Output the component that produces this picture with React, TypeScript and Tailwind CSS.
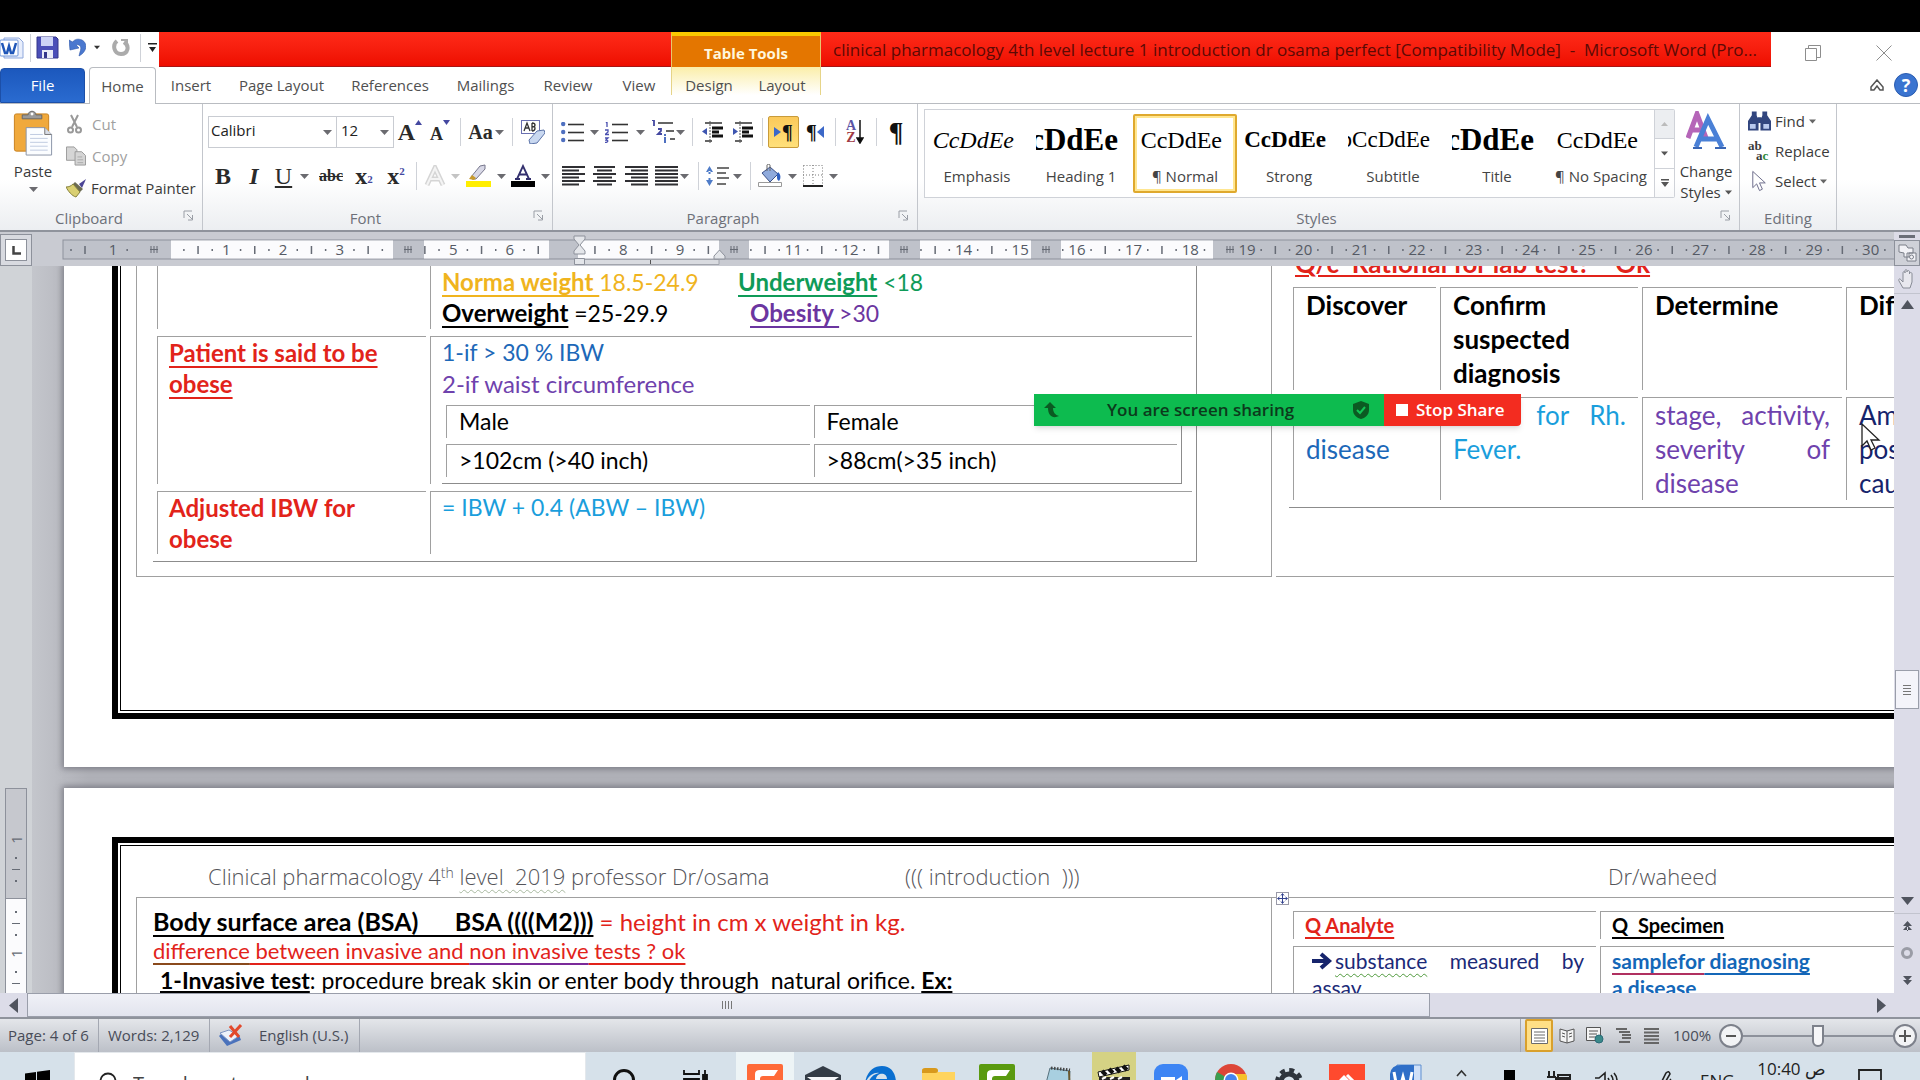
import React from "react";

type Kids = { children?: React.ReactNode; className?: string };

const Caret = ({ className = "text-[#6b6b70]" }: { className?: string }) => (
  <svg width="9" height="5" viewBox="0 0 9 5" className={className} aria-hidden="true">
    <path d="M0 0h9L4.500 5z" fill="currentColor" />
  </svg>
);

const Sep = ({ className = "w-2" }: { className?: string }) => (
  <span className={`flex h-7 shrink-0 justify-center ${className}`}>
    <span className="w-px bg-[#cfd2d8]" />
  </span>
);

function Tool({ label, className = "", children }: Kids & { label: string }) {
  return (
    <button type="button" aria-label={label} className={`flex h-8 shrink-0 items-center justify-center ${className}`}>
      {children}
    </button>
  );
}

function Group({ label, className = "", launcher = true, children }: Kids & { label: string; launcher?: boolean }) {
  return (
    <section className={`flex shrink-0 flex-col border-r border-[#c3c6cc] ${className}`}>
      <div className="flex-1">{children}</div>
      <div className={`relative flex h-6 items-center justify-center text-[15px] text-[#6d7079] ${launcher ? "pr-6" : ""}`}>
        {label}
        {launcher && (
          <button type="button" aria-label={`${label} options`} className="absolute right-2 top-1">
            <svg width="11" height="11" viewBox="0 0 11 11" fill="none" stroke="#9a9ea6">
              <path d="M1 8V1h8M4 4l5 5M9.500 5v5H5" />
            </svg>
          </button>
        )}
      </div>
    </section>
  );
}

const Lines = ({ rows }: { rows: number[][] }) => (
  <svg width="23" height="20" viewBox="0 0 23 20" stroke="#2f2f33" strokeWidth="2">
    {rows.map(([a, b], i) => (
      <path key={i} d={`M${a} ${1 + i * 3.5}H${b}`} />
    ))}
  </svg>
);

const L6 = [[0, 23], [0, 17], [0, 23], [0, 17], [0, 23], [0, 17]];
const C6 = [[1, 22], [4, 19], [0, 23], [4, 19], [0, 23], [4, 19]];
const R6 = [[0, 23], [6, 23], [0, 23], [6, 23], [0, 23], [6, 23]];
const J6 = [[0, 23], [0, 23], [0, 23], [0, 23], [0, 23], [0, 23]];

function TitleBar() {
  return (
    <header className="flex h-[35px] shrink-0 bg-white">
      <div className="flex w-[159px] shrink-0 items-center pb-1">
        <svg width="24" height="24" viewBox="0 0 24 24" className="shrink-0">
          <path d="M4 2h15l4 4v16H4z" fill="#e8eefc" stroke="#8fa8dc" />
          <rect x="0" y="4" width="18" height="16" rx="1" fill="#fff" stroke="#6b92d8" />
          <path d="M2 7l3 10h2l2-7 2 7h2l3-10" fill="none" stroke="#1f56b8" strokeWidth="2.500" />
        </svg>
        <Sep className="w-3" />
        <button type="button" aria-label="Save">
          <svg width="23" height="23" viewBox="0 0 23 23">
            <path d="M1 1h19l2 2v19H1z" fill="#4b4fb8" stroke="#34368a" />
            <path d="M5 1h12v9H5z" fill="#cdd3f6" />
            <path d="M6 14h11v8H6z" fill="#e9ebf7" />
            <path d="M8 16h3v6H8z" fill="#34368a" />
          </svg>
        </button>
        <button type="button" aria-label="Undo" className="ml-2.5 flex items-center gap-2">
          <svg width="17" height="19" viewBox="0 0 17 19">
            <path d="M0 2l1 10 9-2-3-3c4-1 6 2 4 7l-1 4c8-4 9-13 3-16C9 .5 6 1 3.500 4z" fill="#4a78cf" stroke="#2c55a8" strokeWidth=".6" />
          </svg>
          <Caret className="w-[6px] text-[#333]" />
        </button>
        <button type="button" aria-label="Redo" className="ml-3">
          <svg width="18" height="19" viewBox="0 0 18 19" fill="none" stroke="#ababab" strokeWidth="4">
            <path d="M5 3C0 7 2 16 9 16s9-8 3-12" />
            <path d="M9 2h6v5" strokeWidth="2" />
          </svg>
        </button>
        <Sep className="ml-1 w-3" />
        <button type="button" aria-label="Customize quick access" className="ml-0.5">
          <svg width="9" height="9" viewBox="0 0 9 9" fill="#222">
            <path d="M0 0h9v1.500H0zM1 4h7L4.500 9z" />
          </svg>
        </button>
      </div>
      <div className="w-[512px] shrink-0 border-b border-[#a81414] bg-linear-to-b from-[#ff2a18] to-[#ee0c00]" />
      <div className="flex w-[150px] shrink-0 items-center justify-center border-x border-t-4 border-x-[#e8c870] border-t-[#fbc900] bg-[#e47600] pt-1 text-[15px] font-bold text-[#fff6dc]">
        Table Tools
      </div>
      <h1 className="min-w-0 flex-1 whitespace-nowrap border-b border-[#a81414] bg-linear-to-b from-[#ff2a18] to-[#ee0c00] pl-3 text-[17px] leading-[36px] text-[#5c0a05]">
        clinical pharmacology 4th level lecture 1 introduction dr osama perfect [Compatibility Mode]&nbsp; -&nbsp; Microsoft Word (Pro...
      </h1>
      <div className="flex w-[149px] shrink-0 items-center pl-[34px] pt-1.5">
        <button type="button" aria-label="Restore">
          <svg width="16" height="16" viewBox="0 0 16 16" fill="none" stroke="#8d8d8d">
            <path d="M.5 3.500h11v12H.5zM3.500 3V.5h12v12H12" />
          </svg>
        </button>
        <button type="button" aria-label="Close" className="ml-[55px]">
          <svg width="16" height="16" viewBox="0 0 16 16" stroke="#8d8d8d">
            <path d="M.5.5l15 15M15.500.5l-15 15" />
          </svg>
        </button>
      </div>
    </header>
  );
}

function Tabs() {
  const plain = "shrink-0 text-center";
  return (
    <nav className="flex h-[37px] shrink-0 items-stretch border-b border-[#b9bcc1] bg-white text-[15px] text-[#505050]">
      <button type="button" className="mt-px w-[85px] shrink-0 rounded-t-sm border border-[#1c4fa8] bg-linear-to-b from-[#1c58bd] to-[#2a6bd0] text-white">
        File
      </button>
      <button type="button" className="-mb-px ml-1 w-[67px] shrink-0 rounded-t-sm border border-b-0 border-[#b9bcc1] bg-white">
        Home
      </button>
      <button type="button" className={`${plain} w-[70px]`}>Insert</button>
      <button type="button" className={`${plain} w-[111px]`}>Page Layout</button>
      <button type="button" className={`${plain} w-[106px]`}>References</button>
      <button type="button" className={`${plain} w-[85px]`}>Mailings</button>
      <button type="button" className={`${plain} w-[80px]`}>Review</button>
      <button type="button" className={`${plain} w-[62px]`}>View</button>
      <div className="ml-px mb-2 flex w-[150px] shrink-0 border-x border-[#e6d488] bg-linear-to-b from-[#fbeea8] to-white pl-0.5">
        <button type="button" className="-mb-2 w-[72px]">Design</button>
        <button type="button" className="-mb-2 w-[78px]">Layout</button>
      </div>
      <div className="flex flex-1 items-center justify-end gap-2.5 pr-0.5">
        <button type="button" aria-label="Collapse ribbon">
          <svg width="14" height="12" viewBox="0 0 14 12" fill="none" stroke="#555" strokeWidth="1.500">
            <path d="M1 8l6-7 6 7v3h-3L7 7l-3 4H1z" />
          </svg>
        </button>
        <button type="button" aria-label="Help" className="flex size-6 items-center justify-center rounded-full border border-[#2a5cb0] bg-[#3a74d0] text-lg font-bold leading-none text-white">
          ?
        </button>
      </div>
    </nav>
  );
}

function Clipboard() {
  return (
    <Group label="Clipboard" className="w-[203px]">
      <div className="flex pt-1">
        <button type="button" className="flex w-[66px] flex-col items-center pt-0.5 text-[15px] leading-5 text-[#3b3b3b]">
          <svg width="40" height="47" viewBox="0 0 40 48">
            <rect x="1" y="4" width="35" height="38" rx="2" fill="#f0a93c" stroke="#c98220" />
            <path d="M9 9V5h6c0-5 8-5 8 0h6v4z" fill="#9a9a9a" stroke="#666" />
            <circle cx="19" cy="4" r="1.500" fill="#fff" />
            <path d="M13 18h19l7 7v21H13z" fill="#fbfdff" stroke="#8a94a8" />
            <path d="M32 18v7h7" fill="#d8dde6" stroke="#777" />
            <path d="M17 25h13M17 29h18M17 33h18M17 37h18M17 41h18" stroke="#c0cbe0" />
          </svg>
          <span className="mt-1">Paste</span>
          <Caret className="mt-1.5 text-[#6b6b70]" />
        </button>
        <div className="flex flex-col text-[15px]">
          <button type="button" className="flex h-8 items-center gap-2 text-[#a0a0a0]">
            <svg width="18" height="20" viewBox="0 0 18 20" fill="none" stroke="#999" strokeWidth="2">
              <path d="M5 1l6 12M12 1L6 13" />
              <circle cx="4.500" cy="16" r="2.500" />
              <circle cx="12.500" cy="16" r="2.500" />
            </svg>
            Cut
          </button>
          <button type="button" className="flex h-8 items-center gap-1.5 text-[#a0a0a0]">
            <svg width="20" height="20" viewBox="0 0 21 20" fill="#d5d5d5" stroke="#999">
              <path d="M.5.5h8l3 3v11H.5z" />
              <path d="M9.500 5.500h7l4 4v10h-11z" />
              <path d="M12 11h5M12 14h6M12 17h6" stroke="#aaa" />
            </svg>
            Copy
          </button>
          <button type="button" className="flex h-8 items-center gap-1 whitespace-nowrap text-[#3b3b3b]">
            <svg width="21" height="19" viewBox="0 0 21 19">
              <path d="M20 0l-7 5 3 4z" fill="#4b4496" />
              <path d="M9 3l8 7-3 3-8-7z" fill="#6b6b52" />
              <path d="M7 5l7 8-4 5C6 17 2 12 0 8c3 0 5-1 7-3z" fill="#d9cf72" stroke="#85803c" />
            </svg>
            Format Painter
          </button>
        </div>
      </div>
    </Group>
  );
}

const serif = "font-['Liberation_Serif',serif] text-[#2a2a2a]";

function FontGroup() {
  return (
    <Group label="Font" className="w-[350px]">
      <div className="flex items-center pl-[5px] pt-3">
        <label className="relative flex h-8 w-[129px] shrink-0 items-center border border-[#c9ccd2] bg-white">
          <select aria-label="Font name" className="w-full appearance-none bg-transparent pb-1 pl-0.5 text-[15px] text-[#222]">
            <option>Calibri</option>
          </select>
          <span className="pointer-events-none absolute right-1"><Caret /></span>
        </label>
        <label className="relative flex h-8 w-[57px] shrink-0 items-center border border-l-0 border-[#c9ccd2] bg-white">
          <select aria-label="Font size" className="w-full appearance-none bg-transparent pb-1 pl-1 text-[15px] text-[#222]">
            <option>12</option>
          </select>
          <span className="pointer-events-none absolute right-1"><Caret /></span>
        </label>
        <Tool label="Grow font" className={`w-8 ${serif} items-start text-[24px] font-bold leading-8`}>
          A<svg width="7" height="5" viewBox="0 0 7 5" className="mt-1"><path d="M0 5h7L3.500 0z" fill="#4448a0" /></svg>
        </Tool>
        <Tool label="Shrink font" className={`w-7 ${serif} items-start text-[18px] font-bold leading-9`}>
          A<svg width="7" height="5" viewBox="0 0 7 5" className="mt-1"><path d="M0 0h7L3.500 5z" fill="#4448a0" /></svg>
        </Tool>
        <Sep className="w-3" />
        <Tool label="Change case" className={`w-10 gap-0.5 ${serif} text-[20px] font-bold`}>Aa <Caret /></Tool>
        <Sep className="w-3" />
        <Tool label="Clear formatting" className="w-[30px]">
          <svg width="24" height="24" viewBox="0 0 24 24">
            <rect x=".5" y=".5" width="18" height="13" fill="#fff" stroke="#6a70b0" />
            <path d="M3 11l3-8 3 8M4 8h4M11 3v8M11 7c4-2 4 4 0 4M11 3c4 0 4 4 0 4" fill="none" stroke="#333" strokeWidth="1.300" />
            <path d="M8 20l8-9 7-1 1 3-8 10-7 1z" fill="#c9d8f0" stroke="#5c74a8" />
          </svg>
        </Tool>
      </div>
      <div className="flex items-center pl-[5px] pt-3">
        <Tool label="Bold" className={`w-[30px] ${serif} text-[24px] font-bold`}>B</Tool>
        <Tool label="Italic" className={`w-8 ${serif} text-[24px] font-bold italic`}>I</Tool>
        <Tool label="Underline" className={`w-11 gap-2 ${serif} text-[24px]`}><span className="underline">U</span><Caret /></Tool>
        <Tool label="Strikethrough" className={`w-[34px] ${serif} text-[16px] font-bold line-through`}>abc</Tool>
        <Tool label="Subscript" className={`w-8 ${serif} text-[24px] font-bold`}>x<sub className="text-[11px] text-[#4448a0]">2</sub></Tool>
        <Tool label="Superscript" className={`w-8 ${serif} text-[24px] font-bold`}>x<sup className="text-[11px] text-[#4448a0]">2</sup></Tool>
        <Sep className="w-2" />
        <Tool label="Text effects" className="w-11 gap-1">
          <svg width="23" height="22" viewBox="0 0 23 22" fill="none" stroke="#d5d5d5" strokeWidth="5">
            <path d="M3 20L11 3l8 17M6 14h10" />
            <path d="M3 20L11 3l8 17M6 14h10" stroke="#f4f4f4" strokeWidth="2" />
          </svg>
          <Caret className="text-[#c4c4c4]" />
        </Tool>
        <Tool label="Highlight colour" className="w-11 gap-1.5">
          <svg width="25" height="24" viewBox="0 0 25 24">
            <path d="M5 13L14 2l5-1v4L10 15H6z" fill="#d8d8e6" stroke="#77778c" />
            <path d="M3 15l3-4 4 3-2 2z" fill="#c79a2c" />
            <path d="M0 17h25v6H0z" fill="#ffee00" />
          </svg>
          <Caret />
        </Tool>
        <Tool label="Font colour" className="w-11 gap-1.5">
          <svg width="24" height="24" viewBox="0 0 24 24">
            <path d="M6 15l6-13 6 13M8 10.500h8M4 15h5M15 15h5" fill="none" stroke="#33306e" strokeWidth="1.800" />
            <path d="M0 17h24v6H0z" fill="#000" />
          </svg>
          <Caret />
        </Tool>
      </div>
    </Group>
  );
}

function ListIcon({ kind }: { kind: "dot" | "num" }) {
  return (
    <svg width="23" height="21" viewBox="0 0 23 21">
      {[2, 10, 18].map((y, i) => (
        <g key={y}>
          <path d={`M7 ${y + 0.5}h16`} stroke="#333" strokeWidth="1.600" />
          {kind === "dot" ? (
            <circle cx="2.200" cy={y} r="2.200" fill="#4f70c0" />
          ) : (
            <path d={["M1 1l1-1v5", "M0 8h3v2L0 12.500h4", "M0 16h3l-2 2c3 0 2 2.500-1 2.500"][i]} fill="none" stroke="#4a50b0" strokeWidth="1.300" />
          )}
        </g>
      ))}
    </svg>
  );
}

const Indent = ({ flip = false }: { flip?: boolean }) => (
  <svg width="21" height="22" viewBox="0 0 21 22">
    <path d="M3 2h17M3 20h7" stroke="#333" strokeWidth="1.500" />
    <path d="M10 7h11M10 11h7M10 15h11" stroke="#111" strokeWidth="3" />
    <path d="M8 0v22" stroke="#555" strokeDasharray="2 1" />
    <path d={flip ? "M6 10.500L1 7v7z" : "M0 10.500L5 7v7z"} fill="#3e56b0" />
  </svg>
);

const Pilcrow = ({ size = "text-[20px]" }: { size?: string }) => (
  <span className={`font-['Liberation_Serif',serif] font-bold leading-none text-[#111] ${size}`}>¶</span>
);

function Paragraph() {
  return (
    <Group label="Paragraph" className="w-[365px]">
      <div className="flex items-center pl-[5px] pt-3">
        <Tool label="Bullets" className="w-11 gap-1.5"><ListIcon kind="dot" /><Caret /></Tool>
        <Tool label="Numbering" className="w-[45px] gap-2"><ListIcon kind="num" /><Caret /></Tool>
        <Tool label="Multilevel list" className="w-[41px]">
          <svg width="26" height="25" viewBox="0 0 26 25">
            <path d="M8 3h15M16 11h8M20 19h5" stroke="#333" strokeWidth="1.600" />
            <path d="M2 0h2v6M8 9h3v2l-3 3h4" fill="none" stroke="#4448a0" strokeWidth="1.800" />
            <path d="M15 17v6M15 14v2" stroke="#4f70c0" strokeWidth="2" />
          </svg>
          <Caret />
        </Tool>
        <Sep className="w-[9px]" />
        <Tool label="Decrease indent" className="w-[30px]"><Indent /></Tool>
        <Tool label="Increase indent" className="w-[30px]"><Indent flip /></Tool>
        <Sep className="w-[11px]" />
        <Tool label="Left to right" className="w-[31px] rounded-xs border border-[#c89b3a] bg-linear-to-b from-[#fbc95a] to-[#ffe07a]">
          <svg width="8" height="10" viewBox="0 0 8 10"><path d="M0 0l7 5-7 5z" fill="#3c68c8" /></svg>
          <Pilcrow />
        </Tool>
        <Tool label="Right to left" className="w-8">
          <Pilcrow />
          <svg width="7" height="12" viewBox="0 0 7 12"><path d="M7 0L0 6l7 6z" fill="#3c68c8" /></svg>
        </Tool>
        <Sep className="w-2" />
        <Tool label="Sort" className="w-8">
          <span className="flex flex-col font-['Liberation_Serif',serif] text-[14px] font-bold leading-3">
            <span className="text-[#5b55a5]">A</span><span className="text-[#a03a44]">Z</span>
          </span>
          <svg width="8" height="24" viewBox="0 0 8 24"><path d="M4 0v20M4 23l-3-5h6z" stroke="#111" strokeWidth="1.500" /></svg>
        </Tool>
        <Sep className="w-2.5" />
        <Tool label="Show marks" className="w-[30px]"><Pilcrow size="text-[27px]" /></Tool>
      </div>
      <div className="flex items-center pl-[5px] pt-3">
        <Tool label="Align left" className="w-[30px]"><Lines rows={L6} /></Tool>
        <Tool label="Center" className="w-8"><Lines rows={C6} /></Tool>
        <Tool label="Align right" className="w-8"><Lines rows={R6} /></Tool>
        <Tool label="Justify" className="w-10 gap-0.5"><Lines rows={J6} /><Caret /></Tool>
        <Sep className="w-3" />
        <Tool label="Line spacing" className="w-10 gap-1">
          <svg width="23" height="21" viewBox="0 0 23 21">
            <path d="M3.500 0L0 6h7zM3.500 20L0 14h7zM2.500 5h2v3h-2zM2.500 12h2v3h-2z" fill="#4f7cc8" />
            <path d="M11 2h12M11 7h9M11 12h12M11 18h9" stroke="#444" strokeWidth="1.600" />
          </svg>
          <Caret />
        </Tool>
        <Sep className="w-3" />
        <Tool label="Shading" className="w-[42px] gap-1.5">
          <svg width="24" height="24" viewBox="0 0 24 24">
            <path d="M4 9l8-6 8 7-8 8z" fill="#8faadc" stroke="#3b4f86" />
            <path d="M9 7V1c0-1 3-1 3 0v6" fill="none" stroke="#666" />
            <path d="M20 8c3 2 3 7 1 9-2-1-3-4-1-9z" fill="#2e5fc0" />
            <path d="M.5 18.500h23v4H.5z" fill="#fff" stroke="#999" />
          </svg>
          <Caret />
        </Tool>
        <Tool label="Borders" className="w-11 gap-1.5">
          <svg width="20" height="22" viewBox="0 0 20 22" fill="none">
            <path d="M.5.5h19v19M.5.5v19M10 0v20M0 10h20" stroke="#777" strokeDasharray="1 2" />
            <path d="M0 21h20" stroke="#222" strokeWidth="2" />
          </svg>
          <Caret />
        </Tool>
      </div>
    </Group>
  );
}

const styleItems = [
  { name: "Emphasis", sample: "CcDdEe", cls: "italic text-[24px] text-[#222]" },
  { name: "Heading 1", sample: "cDdEe", cls: "font-bold text-[31px]" },
  { name: "¶ Normal", sample: "CcDdEe", cls: "text-[24px]" },
  { name: "Strong", sample: "CcDdEe", cls: "font-bold text-[23px]" },
  { name: "Subtitle", sample: "bCcDdEe", cls: "text-[23px]" },
  { name: "Title", sample: "cDdEe", cls: "font-bold text-[31px]" },
  { name: "¶ No Spacing", sample: "CcDdEe", cls: "text-[24px]" },
];

function Styles() {
  return (
    <Group label="Styles" className="w-[822px]">
      <div className="flex pl-[6px] pt-[5px]">
        <div className="flex h-[89px] w-[731px] border border-[#cfd2d8] bg-white">
          {styleItems.map((s) => (
            <button
              type="button"
              key={s.name}
              className={`flex w-[104px] shrink-0 flex-col items-center ${s.name === "¶ Normal" ? "my-1 rounded-xs border-2 border-[#dfa92e] pt-2 shadow-[inset_0_0_0_2px_#ffe690]" : "pt-3.5"}`}
            >
              <span className={`mr-2 flex h-8 w-[82px] items-center justify-end overflow-hidden font-['Liberation_Serif',serif] text-black ${s.cls}`}>{s.sample}</span>
              <span className="mt-2 whitespace-nowrap text-[15px] leading-6 text-[#444]">{s.name}</span>
            </button>
          ))}
        </div>
        <div className="flex h-[89px] w-5 flex-col divide-y divide-[#cfd2d8] rounded-r-xs border border-l-0 border-[#cfd2d8]">
          <button type="button" aria-label="Previous styles" className="flex flex-1 items-center justify-center bg-[#eceef1]"><svg width="7" height="4" viewBox="0 0 7 4"><path d="M0 4h7L3.500 0z" fill="#bbb" /></svg></button>
          <button type="button" aria-label="Next styles" className="flex flex-1 items-center justify-center"><Caret className="w-[7px] text-[#555]" /></button>
          <button type="button" aria-label="More styles" className="flex flex-1 items-center justify-center"><svg width="8" height="8" viewBox="0 0 8 8" fill="#555"><path d="M0 0h8v1.500H0zM0 3h8L4 8z" /></svg></button>
        </div>
        <button type="button" className="flex w-[62px] flex-col items-center pt-0.5 text-[15px] leading-[21px] text-[#3b3b3b]">
          <svg width="40" height="40" viewBox="0 0 40 40" fill="none">
            <path d="M2 27L11 3l9 24M5 19h12" stroke="#b565b8" strokeWidth="5" />
            <path d="M10 36L22 8l14 28M14 28h17" stroke="#4a80d6" strokeWidth="5" />
            <path d="M7 37h9M29 37h11" stroke="#3a66b4" strokeWidth="2" />
          </svg>
          <span className="mt-2.5">Change</span>
          <span className="flex items-center gap-1">Styles <Caret className="w-[7px] text-[#555]" /></span>
        </button>
      </div>
    </Group>
  );
}

function Editing() {
  return (
    <Group label="Editing" launcher={false} className="w-[97px]">
      <div className="flex flex-col pl-2 pt-0.5 text-[15px] text-[#3b3b3b]">
        <button type="button" className="flex h-[30px] items-center gap-1">
          <svg width="23" height="21" viewBox="0 0 24 21" fill="#31457e">
            <path d="M4 0h5v4l2 6v10H0V10l4-6zM15 0h5v4l4 6v10H13V10l2-6zM10 6h4v6h-4z" />
            <path d="M2 13h6v5H2zM16 13h6v5h-6z" fill="#b9c9ee" />
          </svg>
          Find <Caret className="w-[7px] text-[#666]" />
        </button>
        <button type="button" className="flex h-[30px] items-center gap-1">
          <span className="w-[23px] text-left font-['Liberation_Serif',serif] text-[13px] font-bold leading-[10px]">
            ab<br /><span className="pl-2">a<span className="text-[#2c8a3a]">c</span></span>
          </span>
          Replace
        </button>
        <button type="button" className="flex h-[30px] items-center gap-1">
          <svg width="23" height="22" viewBox="0 0 24 22"><path d="M5 1v17l4-4 3 7 3-1.500L12 13h6z" fill="#fff" stroke="#6a6a88" /></svg>
          Select <Caret className="w-[7px] text-[#666]" />
        </button>
      </div>
    </Group>
  );
}

const UNIT = 56.7;
const ZERO = 169.7;
const bands = [[171, 393], [424, 549], [578, 719], [749, 889], [920, 1031], [1061, 1213]];
const gridMarks = [154, 408, 734, 904, 1046, 1230];
const hiddenNumbers = [0, 4, 7, 10, 13];

function Ruler() {
  const marks: React.ReactNode[] = [];
  for (let n = -1; n <= 30; n++) {
    const x = ZERO + n * UNIT;
    const grey = (p: number) => gridMarks.concat([564]).some((g) => Math.abs(g - p) < 13);
    if (!hiddenNumbers.includes(n)) marks.push(<text key={`n${n}`} x={x} y="23" textAnchor="middle">{Math.abs(n)}</text>);
    [0.25, 0.5, 0.75].forEach((f) => {
      const p = x + f * UNIT;
      if (p < 1888 && !grey(p)) marks.push(<path key={`${n}-${f}`} d={f === 0.5 ? `M${p} 14v8` : `M${p} 17v2`} stroke="#666b75" strokeWidth="1.500" />);
    });
    if (n === -1) marks.push(<path key="first" d={`M${x - 28} 14v8M${x - 42} 17v2`} stroke="#666b75" strokeWidth="1.500" />);
  }
  return (
    <svg className="h-[34px] w-full" fontSize="15" fill="#555a64">
      <rect x="63" y="8" width="1840" height="19" fill="#bfc2ca" stroke="#8d919b" />
      {bands.map(([a, b]) => (
        <rect key={a} x={a} y="8.500" width={b - a} height="18" fill="#fbfbfd" />
      ))}
      {marks}
      {gridMarks.map((g) => (
        <path key={g} d={`M${g - 3} 14v7M${g} 14v7M${g + 3} 14v7M${g - 4} 17.500h8`} stroke="#666b75" fill="none" />
      ))}
      <path d="M579 27.500h140v5H579z" fill="#d9dbe0" stroke="#a2a5ad" />
      <path d="M650.500 28v4" stroke="#555" />
      <path d="M574 4h11v3l-5 6 5 6v3h-11v-3l5-6-5-6z" fill="#e4e6ea" stroke="#8d919b" />
      <path d="M574.500 26.500h10v6h-10z" fill="#e4e6ea" stroke="#8d919b" />
      <path d="M714 27v-3l5.500-6 5.500 6v3z" fill="#e4e6ea" stroke="#8d919b" />
    </svg>
  );
}

const td = "border-l border-t border-[#a0a0a0] align-top p-0";
const u = "underline decoration-2 underline-offset-4";
const bu = `${u} text-[24px]`;

function BmiTable() {
  return (
    <table className="-mt-[7px] ml-4 w-[1044px] table-fixed border-separate border-spacing-x-1 border-spacing-y-[7px] border-b border-r border-[#8c8c8c] text-[23px] leading-[31px]">
      <tbody>
        <tr className="h-[63px]">
          <td className="w-[269px] border-l border-[#a0a0a0]" />
          <td className="border-l border-[#a0a0a0] p-0 pl-[11px] align-top">
            <div className="flex h-[31px] text-[#f0b41e]">
              <span className="w-[296px]"><b className={`${bu} whitespace-pre`}>Norma weight </b>18.5-24.9</span>
              <span className="text-[#0f9b58]"><b className={bu}>Underweight</b> &lt;18</span>
            </div>
            <div className="flex h-[31px]">
              <span className="w-[308px]"><b className={bu}>Overweight</b> =25-29.9</span>
              <span className="text-[#6b35a0]"><b className={`${bu} whitespace-pre`}>Obesity </b>&gt;30</span>
            </div>
          </td>
        </tr>
        <tr>
          <td className={`${td} pl-[11px] pr-6 text-[24px] font-bold text-[#e2231a]`}><span className={u}>Patient is said to be obese</span></td>
          <td className={`${td} pl-[11px]`}>
            <div className="text-[#1d68b8]">1-if &gt; 30 % IBW</div>
            <div className="text-[24px] text-[#6f42ad]">2-if waist circumference</div>
            <table className="w-[740px] table-fixed border-separate border-spacing-x-1 border-spacing-y-[6px] border-b border-r border-[#8c8c8c]">
              <tbody>
                <tr className="h-[33px]">
                  <td className={`${td} pl-3`}>Male</td>
                  <td className={`${td} pl-3`}>Female</td>
                </tr>
                <tr className="h-[33px]">
                  <td className={`${td} pl-3`}>&gt;102cm (&gt;40 inch)</td>
                  <td className={`${td} pl-3`}>&gt;88cm(&gt;35 inch)</td>
                </tr>
              </tbody>
            </table>
          </td>
        </tr>
        <tr className="h-[63px]">
          <td className={`${td} pl-[11px] pr-6 text-[24px] font-bold text-[#e2231a]`}>Adjusted IBW for obese</td>
          <td className={`${td} pl-[11px] text-[#1a9edc]`}>= IBW + 0.4 (ABW – IBW)</td>
        </tr>
      </tbody>
    </table>
  );
}

function LabTable() {
  return (
    <table className="ml-[13px] w-[762px] table-fixed border-separate border-spacing-x-1 border-spacing-y-[7px] border-b border-[#8c8c8c] text-[26px] leading-[34px]">
      <thead>
        <tr className="h-[103px] text-left">
          <th className={`${td} w-[143px] pl-3`}>Discover</th>
          <th className={`${td} w-[198px] pl-3 pr-6`}>Confirm suspected diagnosis</th>
          <th className={`${td} w-[200px] pl-3`}>Determine</th>
          <th className={`${td} pl-3`}>Differentiate</th>
        </tr>
      </thead>
      <tbody>
        <tr className="h-[103px]">
          <td className={`${td} pl-3 pt-[34px] text-[#1d68b8]`}>disease</td>
          <td className={`${td} pl-3 pr-3 text-[#1a9edc]`}>
            <div className="flex justify-end gap-5"><span>for</span><span>Rh.</span></div>
            Fever.
          </td>
          <td className={`${td} pl-3 pr-3 text-[#6f42ad]`}>
            <div className="flex justify-between"><span>stage,</span><span>activity,</span></div>
            <div className="flex justify-between"><span>severity</span><span>of</span></div>
            disease
          </td>
          <td className={`${td} pl-3 text-[#16246c]`}>Among<br />possible<br />causes</td>
        </tr>
      </tbody>
    </table>
  );
}

const squiggleGrey = "underline decoration-wavy decoration-1 underline-offset-4 decoration-[#a8b8a0]";
const pageShadow = "bg-white shadow-[0_0_6px_2px_rgba(90,90,100,0.6)]";

function Pages() {
  return (
    <main className="flex min-w-0 flex-1 flex-col overflow-hidden bg-linear-to-r from-[#c4c6cc] to-[#b0b1b8] to-3% font-['Lato',sans-serif] text-black">
      <article className={`ml-8 w-[2020px] shrink-0 pb-12 pl-12 ${pageShadow}`}>
        <div className="border-b-[6px] border-l-[6px] border-black pb-0.5 pl-0.5">
          <div className="flex h-[445px] border-b border-l border-black pl-[15px]">
            <div className="h-[311px] w-[1136px] shrink-0 border-x border-b border-[#a0a0a0]"><BmiTable /></div>
            <div className="ml-1 h-[311px] flex-1 border-b border-[#a0a0a0]">
              <h2 className="-mt-5 ml-[19px] whitespace-pre text-[26px] font-bold leading-[34px] text-[#e2231a] underline decoration-2 underline-offset-2">Q/c  Rational for lab test?    Ok</h2>
              <LabTable />
            </div>
          </div>
        </div>
      </article>
      <article className={`ml-8 mt-[21px] w-[2020px] shrink-0 pl-12 pt-[49px] ${pageShadow}`}>
        <div className="border-l-[6px] border-t-[6px] border-black pl-0.5 pt-0.5">
          <div className="border-l border-t border-black pl-[15px]">
            <div className="flex h-[51px] whitespace-pre pl-[72px] pt-3.5 font-['Open_Sans',sans-serif] text-[22px] font-light leading-8 text-[#55555a]">
              <span className="w-[697px]">Clinical pharmacology 4<sup className="text-[14px]">th</sup> <span className={squiggleGrey}>level  2019</span> professor Dr/osama</span>
              <span className="w-[703px]">((( introduction  )))</span>
              <span>Dr/waheed</span>
            </div>
            <div className="relative flex border-t border-[#a0a0a0]">
              <span className="absolute -top-1.5 left-[1140px] flex size-[13px] items-center justify-center border border-[#9a9aa8] bg-white">
                <svg width="11" height="11" viewBox="0 0 11 11" stroke="#33428e" fill="none">
                  <path d="M5.500 1v9M1 5.500h9M4 2.500l1.500-2 1.500 2M4 8.500l1.500 2 1.500-2M2.500 4l-2 1.500 2 1.500M8.500 4l2 1.500-2 1.500" />
                </svg>
              </span>
              <div className="w-[1136px] shrink-0 whitespace-pre border-x border-[#a0a0a0] pl-4 pt-2 text-[24px] leading-[30px]">
                <p className="h-[30px]"><b className={`${u} text-[25px]`}>Body surface area (BSA)      BSA ((((M2)))</b><span className="text-[#e2231a]"> = height in cm x weight in kg.</span></p>
                <p className="h-[30px] text-[22px] text-[#e2231a]">
                  <span className={`${u} decoration-[#8a4a1c]`}>difference</span><span className={u}> between invasive and </span><span className={`${u} decoration-[#7a2a9a]`}>non invasive</span><span className={u}> tests ? ok</span>
                </p>
                <p className="h-[30px] pl-[7px] text-[23px] leading-[28px]"><b className="underline decoration-2 underline-offset-2">1-Invasive test</b>: procedure break skin or enter body <span className="underline decoration-[#5f9a50] decoration-dotted decoration-1 underline-offset-4">through  natural</span> orifice. <b className="underline decoration-2 underline-offset-2">Ex:</b></p>
              </div>
              <table className="ml-[17px] mt-[6px] w-[680px] shrink-0 table-fixed border-separate border-spacing-x-1 border-spacing-y-[7px] text-[20px] leading-[27px]">
                <tbody>
                  <tr className="h-[28px] text-left font-bold">
                    <th className={`${td} w-[303px] pl-[11px] text-[#e2231a]`}><span className="underline underline-offset-4">Q Analyte</span></th>
                    <th className={`${td} whitespace-pre pl-[11px]`}><span className="underline underline-offset-4">Q  Specimen</span></th>
                  </tr>
                  <tr>
                    <td className={`${td} pl-[18px] pr-3 text-[21px] text-[#1b2a78]`}>
                      <div className="flex justify-between">
                        <span className="flex items-center">
                          <svg width="21" height="18" viewBox="0 0 21 18" fill="none" stroke="#16246c" strokeWidth="4"><path d="M0 9h16M9 2l8 7-8 7" /></svg>
                          <span className="ml-0.5 underline decoration-[#4f9a3c] decoration-wavy decoration-1 underline-offset-4">substance</span>
                        </span>
                        <span>measured</span><span>by</span>
                      </div>
                      assay.
                    </td>
                    <td className={`${td} pl-[11px] text-[21px] font-bold text-[#1467b8]`}>
                      <span className="underline decoration-[#b03060] underline-offset-4">samplefor</span><span className="underline underline-offset-4"> diagnosing</span><br />a disease
                    </td>
                  </tr>
                </tbody>
              </table>
            </div>
          </div>
        </div>
      </article>
    </main>
  );
}

function VerticalRuler() {
  return (
    <aside className="flex w-8 shrink-0 flex-col items-start bg-[#d0d3d7] pl-[5px] pt-[522px] text-[15px] text-[#666b75]">
      <div className="flex h-[111px] w-[22px] flex-col items-center justify-end gap-2.5 border border-[#8d919b] bg-[#c6c8ce] pb-4">
        <span className="-rotate-90 leading-none">1</span>
        <span className="size-0.5 bg-current" /><span className="h-px w-2 bg-current" /><span className="size-0.5 bg-current" />
      </div>
      <div className="flex w-[22px] flex-1 flex-col items-center gap-2.5 overflow-hidden border-x border-[#8d919b] bg-[#fbfbfd] pt-3">
        <span className="size-0.5 shrink-0 bg-current" /><span className="h-px w-2 shrink-0 bg-current" /><span className="size-0.5 shrink-0 bg-current" />
        <span className="-rotate-90 leading-none">1</span>
        <span className="size-0.5 shrink-0 bg-current" /><span className="h-px w-2 shrink-0 bg-current" />
      </div>
    </aside>
  );
}

function VerticalScroll() {
  return (
    <aside className="flex w-[26px] shrink-0 flex-col items-center bg-[#dcdce8] pt-[3px]">
      <span className="h-[3px] w-4 bg-[#6a6e78]" />
      <button type="button" aria-label="Toggle ruler" className="mt-0.5 flex size-[26px] items-center justify-center border border-[#8d919b] bg-[#cfd1d8]">
        <svg width="19" height="18" viewBox="0 0 19 18" fill="#f2f2f6" stroke="#7a7e88"><path d="M1 1h7l2 3h5v5h-4v4H6V9L1 8zM9 9h9v8H9z" /><circle cx="13.500" cy="13" r="2" /></svg>
      </button>
      <svg width="18" height="20" viewBox="0 0 18 20" className="mt-[3px]" fill="#e8e8ee" stroke="#888c96"><path d="M5 19l-4-7c-1-2 1-3 2-1l2 2V4c0-2 2-2 2 0V2c0-2 2-2 2 0v1c0-2 2.500-2 2.500 0v2c0-2 2.500-2 2.500 0v8l-2 6z" /></svg>
      <span className="mt-1 h-px w-full bg-[#c2c4ce]" />
      <svg width="13" height="9" viewBox="0 0 13 9" className="mt-1.5"><path d="M0 9h13L6.500 0z" fill="#50545e" /></svg>
      <div className="mt-[361px] flex h-[39px] w-6 flex-col items-center justify-center gap-0.5 border border-[#9a9eaa] bg-[#f4f4fa]">
        <span className="h-px w-2 bg-[#777]" /><span className="h-px w-2 bg-[#777]" /><span className="h-px w-2 bg-[#777]" /><span className="h-px w-2 bg-[#777]" />
      </div>
      <svg width="13" height="8" viewBox="0 0 13 8" className="mt-auto"><path d="M0 0h13L6.500 8z" fill="#50545e" /></svg>
      <div className="mt-2 flex h-[104px] w-full flex-col items-center gap-4 border-t border-[#c2c4ce] pt-[7px]">
        <svg width="9" height="10" viewBox="0 0 9 10" fill="#50545e"><path d="M0 5h9L4.500 0zM0 9h9L4.500 4zM4 6h1v4H4z" /></svg>
        <span className="size-3 rounded-full border-3 border-[#9a9ca6]" />
        <svg width="9" height="10" viewBox="0 0 9 10" fill="#50545e"><path d="M0 5h9L4.500 10zM0 1h9L4.500 6z" /></svg>
      </div>
    </aside>
  );
}

function HorizontalScroll() {
  return (
    <div className="flex h-6 shrink-0 items-center bg-[#dcdce8]">
      <span className="flex w-[27px] shrink-0 justify-center"><svg width="9" height="15" viewBox="0 0 9 15"><path d="M9 0v15L0 7.500z" fill="#50545e" /></svg></span>
      <div className="flex h-6 w-[1403px] shrink-0 items-center justify-center gap-0.5 border border-[#9a9eaa] bg-linear-to-b from-[#f0f1f7] to-[#e2e4ee] pr-1">
        <span className="h-2 w-px bg-[#777]" /><span className="h-2 w-px bg-[#777]" /><span className="h-2 w-px bg-[#777]" /><span className="h-2 w-px bg-[#777]" />
      </div>
      <svg width="9" height="15" viewBox="0 0 9 15" className="ml-auto mr-2"><path d="M0 0v15l9-7.500z" fill="#50545e" /></svg>
    </div>
  );
}

function StatusBar() {
  const div = "border-r border-[#a4a8b2]";
  const view = "flex w-7 items-center justify-center";
  return (
    <footer className="flex h-[35px] shrink-0 items-stretch border-t-2 border-[#8f939c] bg-linear-to-b from-[#e4e6ea] to-[#bcc0c8] text-[15px] text-[#484c58]">
      <span className={`flex w-[99px] items-center pl-2 ${div}`}>Page: 4 of 6</span>
      <span className={`flex w-[111px] items-center pl-[9px] ${div}`}>Words: 2,129</span>
      <span className={`flex w-[150px] items-center gap-4 pl-2 ${div}`}>
        <svg width="25" height="24" viewBox="0 0 25 24">
          <path d="M1 12l8 10 14-6-2-5-9 4-8-6z" fill="#4a72bc" />
          <path d="M2 9l9-3 10 6-9 6z" fill="#eef2fb" stroke="#7f95c4" />
          <path d="M12 2l9 11M23 1L12 13" stroke="#e2492c" strokeWidth="3" />
        </svg>
        English (U.S.)
      </span>
      <span className={`flex-1 ${div}`} />
      <span className="ml-1 flex text-[#555]">
        <button type="button" aria-label="Print layout" className="flex w-7 items-center justify-center rounded-xs border-2 border-[#d9a02c] bg-[#ffdf86]">
          <svg width="17" height="16" viewBox="0 0 17 16" fill="#fff" stroke="#6b6b6b"><path d="M.5.5h16v15H.5zM3 4h11M3 7h11M3 10h11M3 13h11" /></svg>
        </button>
        <button type="button" aria-label="Reading" className={view}><svg width="16" height="16" viewBox="0 0 16 16" fill="#f4f4f4" stroke="#555"><path d="M8 3L1 1v12l7 2 7-2V1zM8 3v12M3 5l3 1M3 8l3 1M13 5l-3 1M13 8l-3 1" /></svg></button>
        <button type="button" aria-label="Web layout" className={view}><svg width="18" height="17" viewBox="0 0 18 17" fill="#f4f4f4" stroke="#555"><path d="M.5.5h14v13H.5zM3 4h9M3 7h8M3 10h6" /><circle cx="13" cy="12" r="4" fill="#3a8a8a" stroke="#2b6a78" /></svg></button>
        <button type="button" aria-label="Outline" className={view}><svg width="15" height="16" viewBox="0 0 15 16" stroke="#666" strokeWidth="2"><path d="M0 1h11M3 4h11M6 7h9M6 10h9M3 14h11" /></svg></button>
        <button type="button" aria-label="Draft" className={view}><svg width="15" height="16" viewBox="0 0 15 16" stroke="#666" strokeWidth="2"><path d="M0 1h15M0 4.500h15M0 8h15M0 11.500h15M0 15h15" /></svg></button>
      </span>
      <span className="ml-1 flex w-[50px] items-center justify-start pl-1">100%</span>
      <span className="flex items-center pr-[3px]">
        <button type="button" aria-label="Zoom out" className="flex size-6 items-center justify-center rounded-full border-2 border-[#7d818b] bg-[#f2f3f5]"><span className="h-0.5 w-2.5 bg-[#555]" /></button>
        <input type="range" aria-label="Zoom" defaultValue={50} className="h-0.5 w-[150px] appearance-none border-y border-[#8d919b] bg-white [&::-webkit-slider-thumb]:h-[22px] [&::-webkit-slider-thumb]:w-3 [&::-webkit-slider-thumb]:appearance-none [&::-webkit-slider-thumb]:rounded-b-md [&::-webkit-slider-thumb]:border-2 [&::-webkit-slider-thumb]:border-[#7d818b] [&::-webkit-slider-thumb]:bg-[#f6f6f8]" />
        <button type="button" aria-label="Zoom in" className="flex size-6 items-center justify-center rounded-full border-2 border-[#7d818b] bg-[#f2f3f5]">
          <svg width="12" height="12" viewBox="0 0 12 12" stroke="#555" strokeWidth="2"><path d="M6 0v12M0 6h12" /></svg>
        </button>
      </span>
    </footer>
  );
}

function Taskbar() {
  const app = "flex w-[58px] shrink-0 justify-center pt-3";
  return (
    <nav className="h-7 shrink-0 overflow-hidden bg-[#d6e1ea]">
      <div className="flex h-[58px] items-start">
        <button type="button" aria-label="Start" className="flex w-[74px] shrink-0 justify-center pt-[18px]">
          <svg width="25" height="25" viewBox="0 0 25 25"><path d="M0 3.500L11 2v10H0zM12 1.800L25 0v12H12zM0 13h11v10L0 21.500zM12 13h13v12l-13-1.800z" /></svg>
        </button>
        <label className="flex h-[58px] w-[512px] shrink-0 items-center border border-[#e4e8ec] bg-white pl-6 pt-1.5">
          <svg width="20" height="24" viewBox="0 0 20 24" fill="none" stroke="#222" strokeWidth="1.800"><circle cx="9" cy="9" r="7.500" /><path d="M4 15l-4 7" /></svg>
          <input type="text" placeholder="Type here to search" className="ml-3.5 w-80 bg-transparent text-[20px] placeholder:text-[#444]" />
        </label>
        <span className="flex w-[76px] shrink-0 justify-center pt-[17px]"><span className="size-[22px] rounded-full border-3 border-[#111]" /></span>
        <span className="flex w-[74px] shrink-0 justify-center pr-2 pt-[18px]">
          <svg width="25" height="24" viewBox="0 0 25 24" fill="none" stroke="#111" strokeWidth="1.800"><path d="M1 0v4h15V0M1 9h15v9H1zM22 0v5M22 10v14" /><path d="M20 5h4v4h-4z" fill="#111" /></svg>
        </span>
        <span className="flex h-[58px] w-[58px] shrink-0 justify-center bg-[#edf4f6] pt-3">
          <svg width="36" height="36" viewBox="0 0 36 36"><rect width="36" height="36" rx="2" fill="#ff6a38" /><path d="M8 18V10q0-4 5-4h18l-4 6H16q-3 0-3 3v12H8z" fill="#fff" /></svg>
        </span>
        <span className={app}><svg width="36" height="36" viewBox="0 0 36 36"><path d="M0 11L18 2l18 9v24H0z" fill="#343c46" /><path d="M2 13h32L18 24z" fill="#f6f8fa" /></svg></span>
        <span className={app}><svg width="32" height="36" viewBox="0 0 32 36"><path d="M0 19C2 7 9 2 17 2c9 0 14 7 14 17H11c0 5 8 8 17 4v7C12 36 3 29 3 20c1-6 6-10 11-11-6-1-11 4-14 10zM11 15h11c0-7-10-7-11 0z" fill="#0a6fd0" /></svg></span>
        <span className={app}><svg width="34" height="32" viewBox="0 0 34 32"><path d="M0 5h14l2 3h17v22H0z" fill="#ffd45e" /><path d="M0 7q0-3 3-3h10q3 0 3 2.500T13 9H0z" fill="#d8991c" /></svg></span>
        <span className={app}><svg width="36" height="36" viewBox="0 0 36 36"><rect width="36" height="36" rx="2" fill="#5a9a10" /><path d="M8 18V10q0-4 5-4h18l-4 6H16q-3 0-3 3v12H8z" fill="#fff" /></svg></span>
        <span className="flex w-[66px] shrink-0 justify-center pr-1 pt-3"><svg width="30" height="34" viewBox="0 0 30 34"><path d="M8 4l20 3-2 26-24-6z" fill="#a8cfe0" stroke="#55707c" /><path d="M9 4l19 2" stroke="#444" strokeWidth="3" strokeDasharray="1.500 1.500" /><path d="M27 7l1 22" stroke="#6b5a30" strokeWidth="2" /></svg></span>
        <span className="flex h-[58px] w-11 shrink-0 justify-center bg-[#d5d284] pt-3"><svg width="34" height="32" viewBox="0 0 34 32"><path d="M1 8L32 1v5L2 13z" fill="#fff" stroke="#111" /><path d="M5 7l4 4M12 5l4 4M19 4l4 4M26 2l4 4" stroke="#111" strokeWidth="4" /><path d="M2 13h31v18H2z" fill="#222" /><path d="M5 15l4-2M13 15l4-2M21 15l4-2" stroke="#fff" strokeWidth="2" /></svg></span>
        <span className="flex w-[66px] shrink-0 justify-center pl-1 pt-3"><svg width="34" height="34" viewBox="0 0 34 34"><rect width="34" height="34" rx="9" fill="#3d85f4" /><path d="M7 13h14v9H7zM22 16l6-4v9l-6-4z" fill="#fff" /></svg></span>
        <span className={app}><svg width="32" height="32" viewBox="0 0 32 32"><circle cx="16" cy="16" r="16" fill="#dd4638" /><path d="M16 16L2 8A16 16 0 0 0 12 31z" fill="#3a9e50" /><path d="M16 10h15A16 16 0 0 1 14 32z" fill="#f6c12a" /><circle cx="16" cy="16" r="7.500" fill="#fff" /><circle cx="16" cy="16" r="6" fill="#4584ee" /></svg></span>
        <span className={app}><svg width="28" height="28" viewBox="0 0 28 28" fill="none" stroke="#2e343c" className="mt-1"><circle cx="14" cy="14" r="8" strokeWidth="5" /><circle cx="14" cy="14" r="12" strokeWidth="4" strokeDasharray="5 4.400" /></svg></span>
        <span className={app}><svg width="36" height="36" viewBox="0 0 36 36"><rect width="36" height="36" fill="#ff4a2e" /><path d="M7 19l8-8 8 8-8 8z" fill="#fff" /><path d="M18 11l8 8-8 8" fill="none" stroke="#fff" strokeWidth="3" /></svg></span>
        <span className={app}><svg width="33" height="34" viewBox="0 0 33 34"><path d="M8 1h24v32H4z" fill="#cfe0f8" stroke="#5f8fd0" /><path d="M1 10Q2 1 12 1h13v30H1z" fill="#2f6fc8" /><path d="M5 8l3 16h3l3-11 3 11h3l3-16" fill="none" stroke="#fff" strokeWidth="3" /></svg></span>
        <span className="ml-auto flex pt-[17px] text-[#222]">
          <span className="w-[48px]"><svg width="11" height="8" viewBox="0 0 11 8" fill="none" stroke="#333" strokeWidth="1.600"><path d="M1 7l4.500-5L10 7" /></svg></span>
          <span className="w-[42px]"><svg width="11" height="24" viewBox="0 0 11 24"><path d="M0 1h11v23H0z" /></svg></span>
          <span className="w-[48px]"><svg width="25" height="20" viewBox="0 0 25 20" fill="none" stroke="#222" strokeWidth="2"><path d="M3 2v6M8 2v6M1 8h9M12 6h12v12H12z" /><path d="M10 9h12v8H10z" fill="#222" /></svg></span>
          <span className="w-[62px]"><svg width="25" height="22" viewBox="0 0 25 22" fill="none" stroke="#222" strokeWidth="1.600"><path d="M1 9h4l6-5v16l-6-4H1M14 9q2 3 0 6M17 6q4 5 0 11M20 4q6 7 0 15" /></svg></span>
          <span className="w-[44px]"><svg width="18" height="22" viewBox="0 0 18 22" fill="none" stroke="#222" strokeWidth="1.600"><path d="M2 20L10 4q3-3 4 1L7 17M14 10q3 4-2 8" /></svg></span>
          <span className="w-[54px] text-[17px] leading-6">ENG</span>
          <span dir="rtl" className="-mt-3 w-[104px] pr-8 text-[17px] leading-6">ص 10:40</span>
          <span className="w-[62px]"><svg width="24" height="22" viewBox="0 0 24 22" fill="none" stroke="#222" strokeWidth="1.800"><path d="M1 1h22v18H1z" /></svg></span>
        </span>
      </div>
    </nav>
  );
}

function ShareBar() {
  return (
    <div className="absolute left-[1034px] top-[394px] flex h-8 text-[17px] font-bold shadow-md">
      <div className="flex w-[350px] items-center bg-[#0dbb4f] pl-2.5 pr-[15px] text-[#0c3a1c]">
        <svg width="15" height="17" viewBox="0 0 15 17"><path d="M6 0l6 6H9c0 4 2 7 6 8-6 3-11 0-11-8H0z" fill="#0b5a22" /></svg>
        <span className="ml-12 flex-1 whitespace-nowrap font-semibold">You are screen sharing</span>
        <svg width="16" height="18" viewBox="0 0 16 18"><path d="M8 0l8 3v6c0 5-4 8-8 9-4-1-8-4-8-9V3z" fill="#0b5a22" /><path d="M4 9l3 3 5-6" fill="none" stroke="#12c455" strokeWidth="2" /></svg>
      </div>
      <button type="button" className="flex w-[137px] items-center gap-2 whitespace-nowrap rounded-br-sm bg-[#f32c20] pl-3 font-semibold text-white">
        <span className="size-3 bg-white" />
        Stop Share
      </button>
    </div>
  );
}

export default function App() {
  return (
    <div className="relative flex h-screen flex-col overflow-hidden bg-white font-['Open_Sans','Noto_Sans',sans-serif]">
      <div className="h-8 shrink-0 bg-black" />
      <TitleBar />
      <Tabs />
      <div className="flex h-[128px] shrink-0 overflow-hidden border-b-2 border-[#8f939c] bg-linear-to-b from-white from-60% to-[#eceef1]">
        <Clipboard />
        <FontGroup />
        <Paragraph />
        <Styles />
        <Editing />
      </div>
      <div className="flex min-h-0 flex-1">
        <div className="flex min-w-0 flex-1 flex-col">
          <div className="relative h-[34px] shrink-0 bg-[#c9cbd2]">
            <Ruler />
            <button type="button" aria-label="Tab selector" className="absolute left-0 top-0.5 flex h-8 w-8 items-center justify-center border border-[#8d919b] bg-[#d8dae0]">
              <span className="flex size-[22px] items-center justify-center border border-[#8d919b] bg-white">
                <svg width="9" height="9" viewBox="0 0 9 9" fill="none" stroke="#444" strokeWidth="2.500"><path d="M1.500 0v7.500H9" /></svg>
              </span>
            </button>
          </div>
          <div className="flex min-h-0 flex-1">
            <VerticalRuler />
            <Pages />
          </div>
          <HorizontalScroll />
        </div>
        <VerticalScroll />
      </div>
      <StatusBar />
      <Taskbar />
      <ShareBar />
      <svg width="22" height="30" viewBox="0 0 22 30" className="absolute left-[1861px] top-[423px]">
        <path d="M1 1v22l5-5 4 9 4-2-4-8h8z" fill="#fff" stroke="#222" strokeWidth="1.300" />
      </svg>
    </div>
  );
}
